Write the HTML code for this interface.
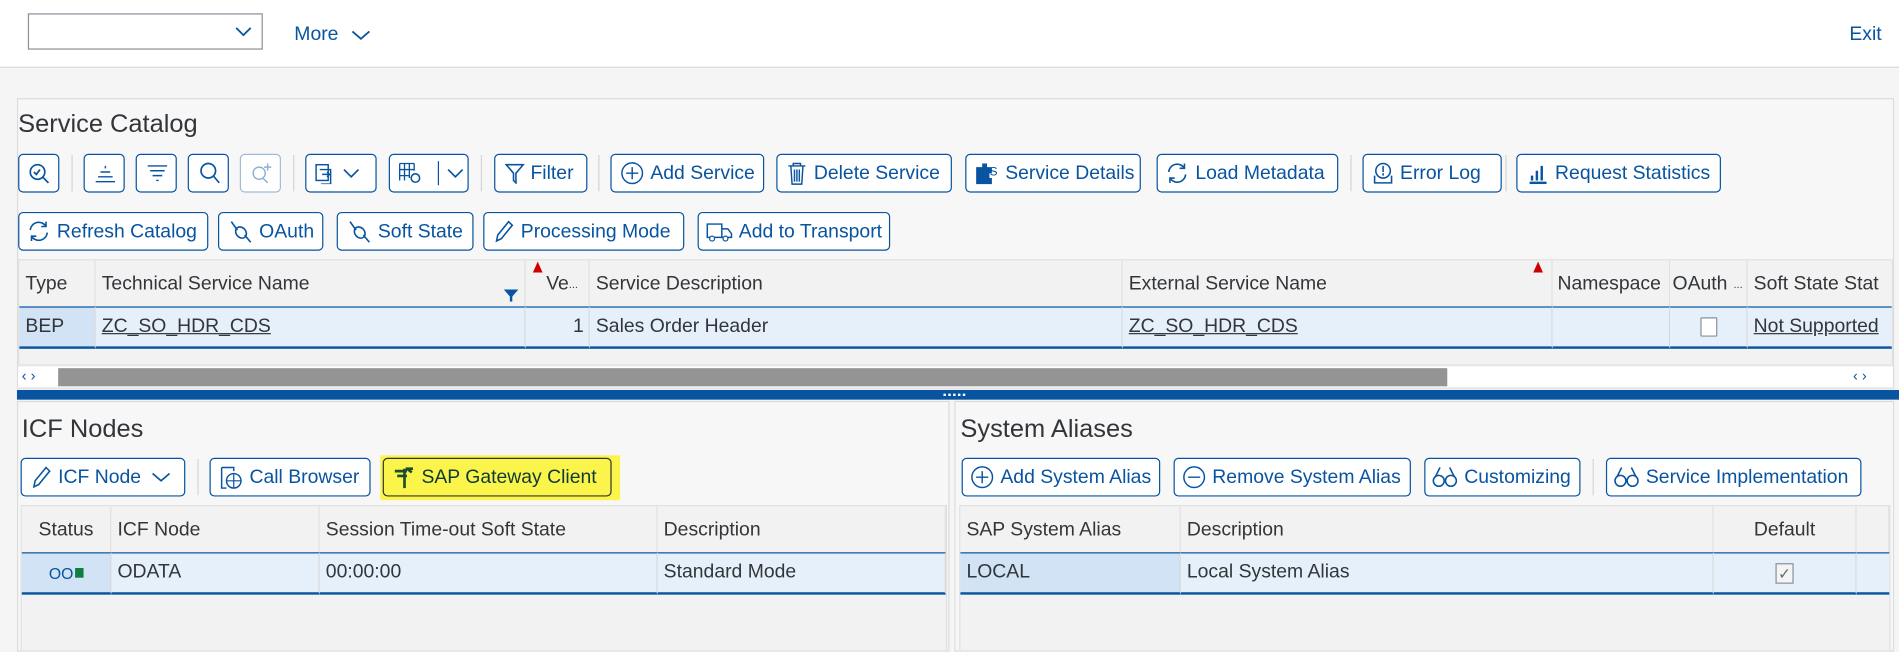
<!DOCTYPE html>
<html><head><meta charset="utf-8"><style>
*{box-sizing:border-box;margin:0;padding:0}
html,body{width:1899px;height:651px;overflow:hidden;background:#f5f5f5;font-family:"Liberation Sans",Arial,sans-serif}
#s{position:absolute;left:0;top:0;width:1568px;height:538px;transform:scale(1.21110);transform-origin:0 0}
.a{position:absolute}
.top{left:0;top:0;width:1568px;height:56px;background:#fff;border-bottom:1px solid #d9d9d9}
.btn{position:absolute;height:32px;background:#fff;border:1px solid #0854a0;border-radius:4px;color:#0854a0;font-size:16px;line-height:30px;white-space:nowrap;padding-left:6px;padding-top:2px;display:flex;align-items:center;gap:5px}
.btn svg{flex:none;margin-top:-2px}
.sep{position:absolute;width:1px;height:30px;background:#d5d5d5}
.title{position:absolute;font-size:21px;color:#32363a}
.th{position:absolute;background:#f2f2f2;border-right:1px solid #e0e0e0;font-size:16px;color:#32363a;padding-left:5px;display:flex;align-items:center}
.td{position:absolute;background:#e5f0fa;border-right:1px solid #d8d8d8;font-size:16px;color:#32363a;padding-left:5px;display:flex;align-items:center;border-bottom:2px solid #0854a0;border-top:1px solid #0854a0}
.u{text-decoration:underline}
</style></head><body><div id="s">
<div class="a top"></div>
<div class="a" style="left:23px;top:11px;width:194px;height:30px;border:1px solid #89919a;background:#fff"></div>
<svg class="a" style="left:194px;top:21px" width="14" height="10"><path d="M1 2 L7 8 L13 2" fill="none" stroke="#0854a0" stroke-width="1.5"/></svg>
<div class="a" style="left:243px;top:20px;font-size:16px;color:#0854a0">More</div>
<svg class="a" style="left:290px;top:24px" width="16" height="10"><path d="M1 2 L8 8 L15 2" fill="none" stroke="#0854a0" stroke-width="1.5"/></svg>
<div class="a" style="left:1527px;top:20px;font-size:16px;color:#0854a0">Exit</div>

<div class="a" style="left:14px;top:81px;width:1550px;height:240px;background:#f7f7f7;border:1px solid #dcdcdc"></div>
<div class="title" style="left:15px;top:91px">Service Catalog</div>

<div class="btn" style="left:15px;top:127px;width:34px;padding-left:7px"><svg width="18" height="18"><circle cx="8" cy="8" r="6" fill="none" stroke="#0854a0" stroke-width="1.4"/><path d="M12 12l5 5M5 8l2 2 3-4" stroke="#0854a0" fill="none" stroke-width="1.4"/></svg></div>
<div class="sep" style="left:59px;top:128px"></div>
<div class="btn" style="left:69px;top:127px;width:34px;padding-left:8px"><svg width="18" height="18"><path d="M9 3v2M5 8h8M3 12h12M1 16h16" stroke="#0854a0" stroke-width="1.2"/></svg></div>
<div class="btn" style="left:112px;top:127px;width:34px;padding-left:8px"><svg width="18" height="18"><path d="M1 3h16M3 7h12M5 11h8M8 15h2" stroke="#0854a0" stroke-width="1.2"/></svg></div>
<div class="btn" style="left:155px;top:127px;width:34px;padding-left:8px"><svg width="18" height="18"><circle cx="8" cy="7" r="6" fill="none" stroke="#0854a0" stroke-width="1.4"/><path d="M12 11l5 6" stroke="#0854a0" stroke-width="1.4"/></svg></div>
<div class="btn" style="left:198px;top:127px;width:34px;padding-left:8px;border-color:#9fbcd9"><svg width="18" height="18"><circle cx="7" cy="9" r="5" fill="none" stroke="#8fb0d3" stroke-width="1.2"/><path d="M10 13l4 4M14 1v6M11 4h6" stroke="#8fb0d3" stroke-width="1.2"/></svg></div>
<div class="sep" style="left:242px;top:128px"></div>
<div class="btn" style="left:252px;top:127px;width:59px;padding-left:7px"><svg width="38" height="18"><rect x="1" y="2" width="10" height="13" fill="none" stroke="#0854a0" stroke-width="1.2"/><path d="M4 6h9v12h-8M6 10h6M10 8l2 2-2 2" fill="none" stroke="#0854a0" stroke-width="1.2"/><path d="M24 6l6 6 6-6" fill="none" stroke="#0854a0" stroke-width="1.4"/></svg></div>
<div class="btn" style="left:321px;top:127px;width:66px;padding-left:7px"><svg width="56" height="20"><path d="M1 2h12M1 7h12M1 12h8M1 2v14M5 2v14M9 2v12M13 2v6" stroke="#0854a0" stroke-width="1.1" fill="none"/><circle cx="14" cy="14" r="3.5" fill="none" stroke="#0854a0" stroke-width="1.3"/><path d="M33 -6v40" stroke="#0854a0"/><path d="M41 7l6 6 6-6" fill="none" stroke="#0854a0" stroke-width="1.4"/></svg></div>
<div class="sep" style="left:397px;top:128px"></div>
<div class="btn" style="left:408px;top:127px;width:77px;padding-left:8px"><svg width="16" height="18"><path d="M1 2h14l-6 7v8l-2-2V9z" fill="none" stroke="#0854a0" stroke-width="1.3"/></svg>Filter</div>
<div class="sep" style="left:494px;top:128px"></div>
<div class="btn" style="left:504px;top:127px;width:127px;padding-left:7px"><svg width="20" height="20"><circle cx="10" cy="10" r="8.5" fill="none" stroke="#0854a0" stroke-width="1.2"/><path d="M10 5v10M5 10h10" stroke="#0854a0" stroke-width="1.2"/></svg>Add Service</div>
<div class="btn" style="left:641px;top:127px;width:145px;padding-left:7px"><svg width="18" height="20"><path d="M2 4h14M6 4V2h6v2M4 4l1 15h8l1-15M7 7v10M9 7v10M11 7v10" fill="none" stroke="#0854a0" stroke-width="1.2"/></svg>Delete Service</div>
<div class="btn" style="left:797px;top:127px;width:145px;padding-left:7px"><svg width="20" height="20"><path d="M1 5h5v-3h4v3h4v5h-2v4h2v5H1z" fill="#0854a0"/><text x="12" y="12" font-size="10" fill="#0854a0" font-family="Liberation Sans">S</text></svg>Service Details</div>
<div class="btn" style="left:955px;top:127px;width:150px;padding-left:6px"><svg width="20" height="20"><path d="M3 9a7 7 0 0 1 13-3M17 11a7 7 0 0 1-13 3M16 2v4h-4M4 18v-4h4" fill="none" stroke="#0854a0" stroke-width="1.3"/></svg>Load Metadata</div>
<div class="sep" style="left:1115px;top:128px"></div>
<div class="btn" style="left:1125px;top:127px;width:115px;padding-left:7px"><svg width="18" height="20"><circle cx="9" cy="8" r="6" fill="none" stroke="#0854a0" stroke-width="1.3"/><path d="M9 4v5M9 10v2M2 12v6h14v-6" fill="none" stroke="#0854a0" stroke-width="1.3"/></svg>Error Log</div>
<div class="sep" style="left:1243px;top:128px"></div>
<div class="btn" style="left:1252px;top:127px;width:169px;padding-left:8px"><svg width="18" height="18"><path d="M2 17h14M4 15v-4M8 15V7M12 15V3" stroke="#0854a0" stroke-width="2"/></svg>Request Statistics</div>

<div class="btn" style="left:15px;top:175px;width:157px;padding-left:6px"><svg width="20" height="20"><path d="M3 9a7 7 0 0 1 13-3M17 11a7 7 0 0 1-13 3M16 2v4h-4M4 18v-4h4" fill="none" stroke="#0854a0" stroke-width="1.3"/></svg>Refresh Catalog</div>
<div class="btn" style="left:180px;top:175px;width:87px;padding-left:8px"><svg width="20" height="20"><path d="M2 2l5 7M13 13l5 6" stroke="#0854a0" stroke-width="1.3"/><ellipse cx="10" cy="11" rx="4" ry="5" transform="rotate(-40 10 11)" fill="none" stroke="#0854a0" stroke-width="1.3"/></svg>OAuth</div>
<div class="btn" style="left:278px;top:175px;width:113px;padding-left:8px"><svg width="20" height="20"><path d="M2 2l5 7M13 13l5 6" stroke="#0854a0" stroke-width="1.3"/><ellipse cx="10" cy="11" rx="4" ry="5" transform="rotate(-40 10 11)" fill="none" stroke="#0854a0" stroke-width="1.3"/></svg>Soft State</div>
<div class="btn" style="left:399px;top:175px;width:166px;padding-left:7px"><svg width="18" height="20"><path d="M3 18l1-5L13 2l3 3-9 11z" fill="none" stroke="#0854a0" stroke-width="1.3"/></svg>Processing Mode</div>
<div class="btn" style="left:576px;top:175px;width:159px;padding-left:6px"><svg width="22" height="20"><path d="M1 4h12v11H1zM13 8h5l3 4v3h-8" fill="none" stroke="#0854a0" stroke-width="1.2"/><circle cx="5" cy="16" r="2" fill="#fff" stroke="#0854a0"/><circle cx="16" cy="16" r="2" fill="#fff" stroke="#0854a0"/></svg>Add to Transport</div>

<div class="a" style="left:15px;top:214px;width:1548px;height:88px;background:#f2f2f2;border:1px solid #e0e0e0"></div>
<div class="th" style="left:16px;top:215px;width:63px;height:39px">Type</div>
<div class="th" style="left:79px;top:215px;width:355px;height:39px">Technical Service Name</div>
<div class="a" style="left:416px;top:239px;width:0;height:0;border-left:6px solid transparent;border-right:6px solid transparent;border-top:7px solid #0854a0"></div>
<div class="a" style="left:421px;top:244px;width:2px;height:5px;background:#0854a0"></div>
<div class="th" style="left:434px;top:215px;width:53px;height:39px;padding-left:17px">Ve<span style="font-size:9px">...</span></div>
<div class="a" style="left:440px;top:216px;border-left:4px solid transparent;border-right:4px solid transparent;border-bottom:9px solid #c00"></div>
<div class="th" style="left:487px;top:215px;width:440px;height:39px">Service Description</div>
<div class="th" style="left:927px;top:215px;width:355px;height:39px">External Service Name</div>
<div class="a" style="left:1266px;top:216px;border-left:4px solid transparent;border-right:4px solid transparent;border-bottom:9px solid #c00"></div>
<div class="th" style="left:1282px;top:215px;width:97px;height:39px;padding-left:4px">Namespace</div>
<div class="th" style="left:1379px;top:215px;width:64px;height:39px;padding-left:2px">OAuth<span style="font-size:9px;margin-left:5px">...</span></div>
<div class="th" style="left:1443px;top:215px;width:119px;height:39px;overflow:hidden;white-space:nowrap;border-right:0">Soft State Stat</div>

<div class="td" style="left:16px;top:253px;width:63px;height:35px;background:#d1e3f5">BEP</div>
<div class="td" style="left:79px;top:253px;width:355px;height:35px"><span class="u">ZC_SO_HDR_CDS</span></div>
<div class="td" style="left:434px;top:253px;width:53px;height:35px;justify-content:flex-end;padding-right:4px">1</div>
<div class="td" style="left:487px;top:253px;width:440px;height:35px">Sales Order Header</div>
<div class="td" style="left:927px;top:253px;width:355px;height:35px"><span class="u">ZC_SO_HDR_CDS</span></div>
<div class="td" style="left:1282px;top:253px;width:97px;height:35px"></div>
<div class="td" style="left:1379px;top:253px;width:64px;height:35px"><div style="margin-left:20px;width:14px;height:16px;border:1px solid #89919a;background:#fff;border-radius:1px"></div></div>
<div class="td" style="left:1443px;top:253px;width:119px;height:35px;border-right:0;white-space:nowrap"><span class="u">Not Supported</span></div>

<div class="a" style="left:15px;top:303px;width:1548px;height:17px;background:#fff"></div>
<div class="a" style="left:18px;top:303px;font-size:12px;color:#0854a0">&#x2039; &#x203A;</div>
<div class="a" style="left:48px;top:304px;width:1147px;height:15px;background:#949494"></div>
<div class="a" style="left:1530px;top:303px;font-size:12px;color:#0854a0">&#x2039; &#x203A;</div>
<div class="a" style="left:14px;top:322px;width:1554px;height:8px;background:#0854a0"></div>
<div class="a" style="left:779px;top:325px;width:18px;height:2px;border-top:2px dotted #fff"></div>

<div class="a" style="left:14px;top:331px;width:770px;height:207px;background:#f7f7f7;border:1px solid #dcdcdc"></div>
<div class="title" style="left:18px;top:343px">ICF Nodes</div>
<div class="btn" style="left:17px;top:378px;width:136px;padding-left:7px"><svg width="18" height="20"><path d="M3 18l1-5L13 2l3 3-9 11z" fill="none" stroke="#0854a0" stroke-width="1.3"/></svg>ICF Node<svg width="16" height="10" style="margin-left:4px"><path d="M1 2l7 6 7-6" fill="none" stroke="#0854a0" stroke-width="1.4"/></svg></div>
<div class="sep" style="left:163px;top:379px"></div>
<div class="btn" style="left:173px;top:378px;width:133px;padding-left:5px"><svg width="22" height="22"><path d="M4 3h10v3M4 3v17h4" fill="none" stroke="#0854a0" stroke-width="1.2"/><circle cx="14" cy="14" r="6" fill="none" stroke="#0854a0" stroke-width="1.2"/><path d="M8 14h12M14 8v12" stroke="#0854a0"/></svg>Call Browser</div>
<div class="a" style="left:314px;top:376px;width:198px;height:37px;background:#fbf44a"></div>
<div class="btn" style="left:316px;top:378px;width:189px;padding-left:8px;background:#fbf44a;border-color:#333"><svg width="18" height="20"><path d="M1 5h10M3 9h8M9 3v16M10 3h6M11 3l4 3" stroke="#1b4d2e" stroke-width="2.2" fill="none"/></svg><span style="color:#0f3a34">SAP Gateway Client</span></div>
<div class="a" style="left:17px;top:417px;width:765px;height:121px;background:#f2f2f2;border:1px solid #e0e0e0"></div>
<div class="th" style="left:18px;top:418px;width:74px;height:39px;justify-content:center;padding:0">Status</div>
<div class="th" style="left:92px;top:418px;width:172px;height:39px">ICF Node</div>
<div class="th" style="left:264px;top:418px;width:279px;height:39px">Session Time-out Soft State</div>
<div class="th" style="left:543px;top:418px;width:238px;height:39px">Description</div>
<div class="td" style="left:18px;top:456px;width:74px;height:35px;background:#d1e3f5;justify-content:center;padding:0;color:#0854a0;font-size:13px">OO<span style="display:inline-block;width:7px;height:8px;background:#107e3e;margin-left:1px"></span></div>
<div class="td" style="left:92px;top:456px;width:172px;height:35px">ODATA</div>
<div class="td" style="left:264px;top:456px;width:279px;height:35px">00:00:00</div>
<div class="td" style="left:543px;top:456px;width:238px;height:35px">Standard Mode</div>

<div class="a" style="left:788px;top:331px;width:776px;height:207px;background:#f7f7f7;border:1px solid #dcdcdc"></div>
<div class="title" style="left:793px;top:343px">System Aliases</div>
<div class="btn" style="left:794px;top:378px;width:164px;padding-left:6px"><svg width="20" height="20"><circle cx="10" cy="10" r="8.5" fill="none" stroke="#0854a0" stroke-width="1.2"/><path d="M10 5v10M5 10h10" stroke="#0854a0" stroke-width="1.2"/></svg>Add System Alias</div>
<div class="btn" style="left:969px;top:378px;width:196px;padding-left:6px"><svg width="20" height="20"><circle cx="10" cy="10" r="8.5" fill="none" stroke="#0854a0" stroke-width="1.2"/><path d="M5 10h10" stroke="#0854a0" stroke-width="1.2"/></svg>Remove System Alias</div>
<div class="btn" style="left:1176px;top:378px;width:129px;padding-left:5px"><svg width="22" height="20"><circle cx="6" cy="13" r="4.5" fill="none" stroke="#0854a0" stroke-width="1.3"/><circle cx="16" cy="13" r="4.5" fill="none" stroke="#0854a0" stroke-width="1.3"/><path d="M3 10l4-8M19 10l-4-8" stroke="#0854a0" stroke-width="1.3"/></svg>Customizing</div>
<div class="sep" style="left:1315px;top:379px"></div>
<div class="btn" style="left:1326px;top:378px;width:211px;padding-left:5px"><svg width="22" height="20"><circle cx="6" cy="13" r="4.5" fill="none" stroke="#0854a0" stroke-width="1.3"/><circle cx="16" cy="13" r="4.5" fill="none" stroke="#0854a0" stroke-width="1.3"/><path d="M3 10l4-8M19 10l-4-8" stroke="#0854a0" stroke-width="1.3"/></svg>Service Implementation</div>
<div class="a" style="left:792px;top:417px;width:769px;height:121px;background:#f2f2f2;border:1px solid #e0e0e0"></div>
<div class="th" style="left:793px;top:418px;width:182px;height:39px">SAP System Alias</div>
<div class="th" style="left:975px;top:418px;width:440px;height:39px">Description</div>
<div class="th" style="left:1415px;top:418px;width:118px;height:39px;justify-content:center;padding:0">Default</div>
<div class="th" style="left:1533px;top:418px;width:27px;height:39px"></div>
<div class="td" style="left:793px;top:456px;width:182px;height:35px;background:#d1e3f5">LOCAL</div>
<div class="td" style="left:975px;top:456px;width:440px;height:35px">Local System Alias</div>
<div class="td" style="left:1415px;top:456px;width:118px;height:35px;justify-content:center;padding:0"><div style="width:15px;height:17px;border:1px solid #89919a;background:#f4f4f4;color:#6a6d70;font-size:13px;line-height:15px;text-align:center">&#x2713;</div></div>
<div class="td" style="left:1533px;top:456px;width:27px;height:35px;border-right:0"></div>
</div></body></html>
